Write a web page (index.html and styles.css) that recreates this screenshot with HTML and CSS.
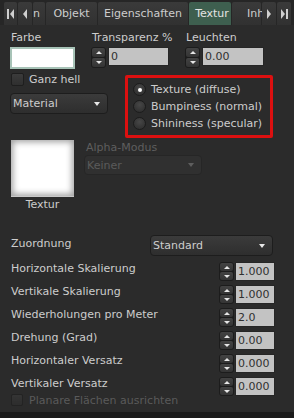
FILE: index.html
```html
<!DOCTYPE html>
<html lang="de">
<head>
  <meta charset="UTF-8" />
  <title>Textur</title>
  <link rel="stylesheet" href="styles.css">
</head>
<body>
  <div class="panel">
    <div class="tabs">
      <div class="tab-btn w13"><svg width="9" height="10" viewBox="0 0 9 10"><rect x="1" y="0" width="2" height="10" fill="#cfcfcf"/><path d="M8 0 L4 5 L8 10 Z" fill="#cfcfcf"/></svg></div>
      <div class="tab-btn w14"><svg width="6" height="10" viewBox="0 0 6 10"><path d="M5 0 L1 5 L5 10 Z" fill="#cfcfcf"/></svg></div>
      <div class="tab tab-cut-left">n</div>
      <div class="tab tab-objekt">Objekt</div>
      <div class="tab tab-eig">Eigenschaften</div>
      <div class="tab tab-textur active">Textur</div>
      <div class="tab tab-cut-right">Inh</div>
      <div class="tab-btn w14"><svg width="6" height="10" viewBox="0 0 6 10"><path d="M1 0 L5 5 L1 10 Z" fill="#cfcfcf"/></svg></div>
      <div class="tab-btn w14 last"><svg width="9" height="10" viewBox="0 0 9 10"><path d="M1 0 L5 5 L1 10 Z" fill="#cfcfcf"/><rect x="6" y="0" width="2" height="10" fill="#cfcfcf"/></svg></div>
    </div>

    <div class="fields">
      <div class="field f-color">
        <div class="lbl">Farbe</div>
        <div class="swatch"></div>
      </div>
      <div class="field f-trans">
        <div class="lbl">Transparenz %</div>
        <div class="spin-input">
          <div class="spin tall"><div class="half"><i class="up"></i></div><div class="half"><i class="down"></i></div></div>
          <div class="num wide">0</div>
        </div>
      </div>
      <div class="field f-glow">
        <div class="lbl">Leuchten</div>
        <div class="spin-input">
          <div class="spin tall"><div class="half"><i class="up"></i></div><div class="half"><i class="down"></i></div></div>
          <div class="num wide">0.00</div>
        </div>
      </div>
    </div>

    <div class="mid">
      <div class="mid-left">
        <div class="check-row">
          <div class="check"></div>
          <span>Ganz hell</span>
        </div>
        <div class="dropdown material">
          <span>Material</span>
          <i class="arrow"></i>
        </div>
      </div>
      <div class="radiobox">
        <div class="radio-row"><div class="radio on"></div><span>Texture (diffuse)</span></div>
        <div class="radio-row"><div class="radio"></div><span>Bumpiness (normal)</span></div>
        <div class="radio-row"><div class="radio"></div><span>Shininess (specular)</span></div>
      </div>
    </div>

    <div class="tex">
      <div class="tex-left">
        <div class="tex-swatch"></div>
        <div class="tex-caption">Textur</div>
      </div>
      <div class="alpha">
        <div class="lbl dim">Alpha-Modus</div>
        <div class="dropdown disabled">
          <span>Keiner</span>
          <i class="arrow"></i>
        </div>
      </div>
    </div>

    <div class="map-row">
      <div class="map-lbl">Zuordnung</div>
      <div class="dropdown standard">
        <span>Standard</span>
        <i class="arrow"></i>
      </div>
    </div>

    <div class="rows">
      <div class="row">
        <div class="row-lbl">Horizontale Skalierung</div>
        <div class="spin"><div class="half"><i class="up"></i></div><div class="half"><i class="down"></i></div></div>
        <div class="num">1.000</div>
      </div>
      <div class="row">
        <div class="row-lbl">Vertikale Skalierung</div>
        <div class="spin"><div class="half"><i class="up"></i></div><div class="half"><i class="down"></i></div></div>
        <div class="num">1.000</div>
      </div>
      <div class="row">
        <div class="row-lbl">Wiederholungen pro Meter</div>
        <div class="spin"><div class="half"><i class="up"></i></div><div class="half"><i class="down"></i></div></div>
        <div class="num">2.0</div>
      </div>
      <div class="row">
        <div class="row-lbl">Drehung (Grad)</div>
        <div class="spin"><div class="half"><i class="up"></i></div><div class="half"><i class="down"></i></div></div>
        <div class="num">0.00</div>
      </div>
      <div class="row">
        <div class="row-lbl">Horizontaler Versatz</div>
        <div class="spin"><div class="half"><i class="up"></i></div><div class="half"><i class="down"></i></div></div>
        <div class="num">0.000</div>
      </div>
      <div class="row">
        <div class="row-lbl">Vertikaler Versatz</div>
        <div class="spin"><div class="half"><i class="up"></i></div><div class="half"><i class="down"></i></div></div>
        <div class="num">0.000</div>
      </div>
    </div>

    <div class="planar">
      <div class="check small"></div>
      <span>Planare Flächen ausrichten</span>
    </div>
  </div>
</body>
</html>
```

FILE: styles.css
```css
body {
  margin: 0; width: 294px; height: 418px; overflow: hidden;
  background: #1b1b1b; color: #cdcdcd;
  font-family: "DejaVu Sans", sans-serif; font-size: 11px;
}
.panel { height: 412px; background: #2b2b2b; }

/* tab strip */
.tabs {
  display: flex; height: 25px; box-sizing: border-box;
  padding: 2px 0 0 4px; background: #262626;
}
.tab, .tab-btn {
  height: 23px; margin-right: 1px; box-sizing: border-box;
  background: linear-gradient(#3a3a3a, #313131);
  border-radius: 2px 2px 0 0;
  display: flex; align-items: center; justify-content: center;
  line-height: 13px; white-space: nowrap;
}
.tab-btn.last { margin-right: 0; }
.w13 { width: 13px; }
.w14 { width: 14px; }
.tab-cut-left { width: 12px; justify-content: flex-start; padding-left: 0; }
.tab-objekt { width: 51px; }
.tab-eig { width: 90px; }
.tab-textur { width: 42px; padding-left: 4px; }
.tab-cut-right { width: 29px; justify-content: flex-start; padding-left: 15px; }
.tab.active { background: #3e5f4f; color: #e4e4e4; }

/* labels */
.lbl { line-height: 13px; margin-bottom: 3px; padding-left: 1px; white-space: nowrap; }
.dim { color: #5e5e5e; }

/* top fields */
.fields { display: flex; padding: 6px 0 0 10px; height: 38px; }
.f-color { width: 65px; margin-right: 16px; }
.f-trans { width: 78px; margin-right: 16px; }
.swatch {
  width: 61px; height: 18px; background: #fff;
  border: 2px solid #a7c3b7;
}
.spin-input { display: flex; gap: 2px; }

/* spinner */
.spin {
  width: 15px; height: 19px; box-sizing: border-box;
  display: flex; flex-direction: column; gap: 1px;
  background: #1c1c1c; border: 1px solid #1c1c1c; border-radius: 3px;
  flex-shrink: 0;
}
.spin.tall { height: 21px; }
.half {
  flex: 1; border-radius: 2px;
  background: linear-gradient(#434343, #343434);
  display: flex; align-items: center; justify-content: center;
}
.up, .down { width: 0; height: 0; border-left: 3px solid transparent; border-right: 3px solid transparent; }
.up { border-bottom: 3px solid #e6e6e6; }
.down { border-top: 3px solid #e6e6e6; }

.num {
  width: 40px; height: 19px; box-sizing: border-box;
  background: #c3c3c3; color: #303030;
  border: 1px solid #262626; padding-left: 2px;
  line-height: 17px; font-size: 11px;
}
.num.wide { width: 62px; }

/* middle */
.mid { display: flex; padding-left: 10px; height: 69px; }
.mid-left { width: 98px; margin-right: 17px; padding-top: 4px; }
.check-row { display: flex; align-items: center; gap: 5px; padding-left: 1px; height: 13px; line-height: 13px; }
.check {
  width: 13px; height: 13px; box-sizing: border-box;
  background: linear-gradient(#3b3b3b, #2f2f2f);
  border: 1px solid #1e1e1e; border-radius: 2px;
}
.check.small { width: 12px; height: 12px; opacity: 0.6; }

.dropdown {
  height: 21px; box-sizing: border-box;
  display: flex; align-items: center; justify-content: space-between;
  padding: 0 7px 0 2px;
  background: linear-gradient(#3b3b3b, #2e2e2e);
  border: 1px solid #1d1d1d; border-radius: 4px;
}
.arrow {
  width: 0; height: 0;
  border-left: 3.5px solid transparent; border-right: 3.5px solid transparent;
  border-top: 4px solid #e8e8e8;
}
.material { width: 98px; margin-top: 7px; }

.radiobox {
  margin-top: 6px; width: 148px; height: 63px; box-sizing: border-box;
  border: 3px solid #dc1010; border-radius: 2px;
  padding: 3px 0 3px 5px;
}
.radio-row { height: 17px; display: flex; align-items: center; gap: 5px; line-height: 13px; }
.radio {
  width: 13px; height: 13px; box-sizing: border-box; border-radius: 50%;
  background: radial-gradient(circle at 50% 35%, #474747, #2a2a2a);
  border: 1px solid #1c1c1c;
  display: flex; align-items: center; justify-content: center;
}
.radio.on::after { content: ""; width: 4px; height: 4px; border-radius: 50%; background: #fff; }

/* texture */
.tex { display: flex; padding-left: 11px; margin-top: 2px; }
.tex-left { width: 63px; }
.tex-swatch {
  height: 56px; background: #fff;
  box-shadow: inset 0 0 6px 2px #a0a0a0;
  border-bottom: 1px solid #c8c8c8;
}
.tex-caption { text-align: center; line-height: 13px; margin-top: 1px; }
.alpha { margin-left: 10px; }
.alpha .lbl { margin-top: 1px; margin-bottom: 1px; padding-left: 2px; }
.dropdown.disabled {
  width: 118px; height: 20px; color: #5b5b5b;
  background: #303030; border-color: #262626;
}
.dropdown.disabled .arrow { border-top-color: #5e5e5e; }

/* mapping */
.map-row { display: flex; padding-left: 11px; margin-top: 24px; }
.map-lbl { width: 139px; line-height: 13px; margin-top: 2px; }
.standard { width: 123px; }

/* numeric rows */
.rows { margin-top: 6px; }
.row { display: flex; height: 23px; padding-left: 11px; }
.row-lbl { width: 208px; line-height: 13px; }
.row .spin { margin-right: 1px; }

.planar {
  display: flex; align-items: center; gap: 6px;
  padding-left: 11px; margin-top: -6px; height: 12px;
  color: #5a5a5a; line-height: 13px;
}
```
